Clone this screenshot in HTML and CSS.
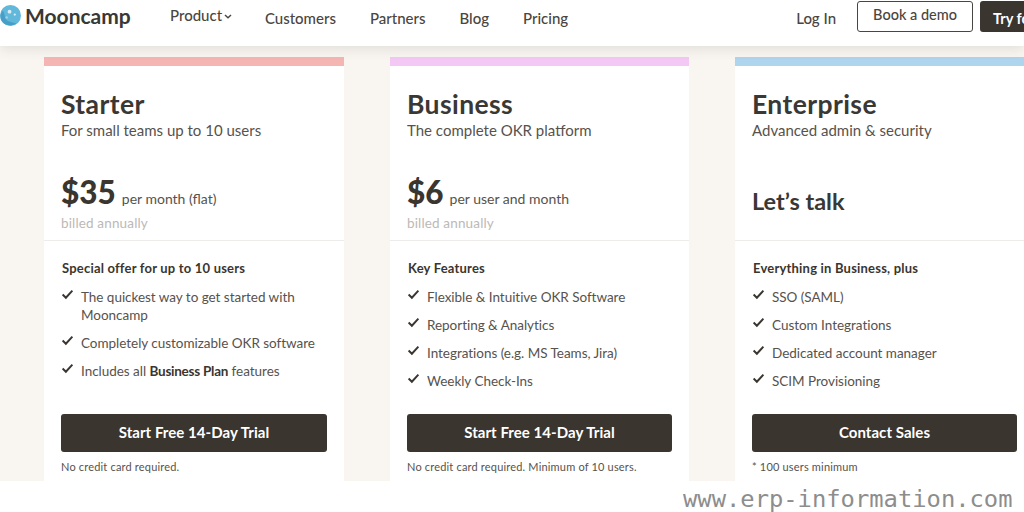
FILE: index.html
```html
<!DOCTYPE html>
<html lang="en">
<head>
<meta charset="utf-8">
<title>Mooncamp Pricing</title>
<link rel="stylesheet" href="styles.css">
</head>
<body>
<div class="page">
  <header class="topbar">
    <div class="logo">
      <svg class="logo-mark" viewBox="0 0 22 22" aria-hidden="true">
        <circle cx="11" cy="11" r="11" fill="#62b8da"/>
        <path d="M3 6c3 4 1 9 6 11 3 1 6 2 8 2-3 3-9 3-13 0C0 16-1 10 3 6z" fill="#479fc8"/>
        <circle cx="10" cy="7" r="2" fill="#d8eef6"/>
        <circle cx="15.500" cy="10" r="1.200" fill="#d8eef6"/>
        <circle cx="7" cy="13" r="1.300" fill="#9ed3e8"/>
      </svg>
      <span>Mooncamp</span>
    </div>
    <nav class="nav">
      <a class="nav-link raised">Product <svg class="caret" viewBox="0 0 8 5" aria-hidden="true"><path d="M1 1l3 2.800L7 1" fill="none" stroke="#4a4540" stroke-width="1.400"/></svg></a>
      <a class="nav-link">Customers</a>
      <a class="nav-link">Partners</a>
      <a class="nav-link">Blog</a>
      <a class="nav-link">Pricing</a>
    </nav>
    <div class="actions">
      <a class="nav-link">Log In</a>
      <a class="btn-outline">Book a demo</a>
      <a class="btn-try">Try for free</a>
    </div>
  </header>

  <main class="plans">
    <section class="card starter">
      <div class="card-head">
        <h2>Starter</h2>
        <p class="tagline">For small teams up to 10 users</p>
        <div class="price"><strong>$35</strong><span>per month (flat)</span></div>
        <p class="billed">billed annually</p>
      </div>
      <div class="card-body">
        <h3>Special offer for up to 10 users</h3>
        <ul class="features">
          <li><svg class="check" viewBox="0 0 12 10"><path d="M1.500 5l3 3 6-6.500" fill="none" stroke="#3a352f" stroke-width="1.800"/></svg><span>The quickest way to get started with Mooncamp</span></li>
          <li><svg class="check" viewBox="0 0 12 10"><path d="M1.500 5l3 3 6-6.500" fill="none" stroke="#3a352f" stroke-width="1.800"/></svg><span>Completely customizable OKR software</span></li>
          <li><svg class="check" viewBox="0 0 12 10"><path d="M1.500 5l3 3 6-6.500" fill="none" stroke="#3a352f" stroke-width="1.800"/></svg><span>Includes all <b>Business Plan</b> features</span></li>
        </ul>
        <a class="cta">Start Free 14-Day Trial</a>
        <p class="note">No credit card required.</p>
      </div>
    </section>

    <section class="card business">
      <div class="card-head">
        <h2>Business</h2>
        <p class="tagline">The complete OKR platform</p>
        <div class="price"><strong>$6</strong><span>per user and month</span></div>
        <p class="billed">billed annually</p>
      </div>
      <div class="card-body">
        <h3>Key Features</h3>
        <ul class="features">
          <li><svg class="check" viewBox="0 0 12 10"><path d="M1.500 5l3 3 6-6.500" fill="none" stroke="#3a352f" stroke-width="1.800"/></svg><span>Flexible &amp; Intuitive OKR Software</span></li>
          <li><svg class="check" viewBox="0 0 12 10"><path d="M1.500 5l3 3 6-6.500" fill="none" stroke="#3a352f" stroke-width="1.800"/></svg><span>Reporting &amp; Analytics</span></li>
          <li><svg class="check" viewBox="0 0 12 10"><path d="M1.500 5l3 3 6-6.500" fill="none" stroke="#3a352f" stroke-width="1.800"/></svg><span>Integrations (e.g. MS Teams, Jira)</span></li>
          <li><svg class="check" viewBox="0 0 12 10"><path d="M1.500 5l3 3 6-6.500" fill="none" stroke="#3a352f" stroke-width="1.800"/></svg><span>Weekly Check-Ins</span></li>
        </ul>
        <a class="cta">Start Free 14-Day Trial</a>
        <p class="note">No credit card required. Minimum of 10 users.</p>
      </div>
    </section>

    <section class="card enterprise">
      <div class="card-head">
        <h2>Enterprise</h2>
        <p class="tagline">Advanced admin &amp; security</p>
        <p class="talk">Let’s talk</p>
      </div>
      <div class="card-body">
        <h3>Everything in Business, plus</h3>
        <ul class="features">
          <li><svg class="check" viewBox="0 0 12 10"><path d="M1.500 5l3 3 6-6.500" fill="none" stroke="#3a352f" stroke-width="1.800"/></svg><span>SSO (SAML)</span></li>
          <li><svg class="check" viewBox="0 0 12 10"><path d="M1.500 5l3 3 6-6.500" fill="none" stroke="#3a352f" stroke-width="1.800"/></svg><span>Custom Integrations</span></li>
          <li><svg class="check" viewBox="0 0 12 10"><path d="M1.500 5l3 3 6-6.500" fill="none" stroke="#3a352f" stroke-width="1.800"/></svg><span>Dedicated account manager</span></li>
          <li><svg class="check" viewBox="0 0 12 10"><path d="M1.500 5l3 3 6-6.500" fill="none" stroke="#3a352f" stroke-width="1.800"/></svg><span>SCIM Provisioning</span></li>
        </ul>
        <a class="cta">Contact Sales</a>
        <p class="note">* 100 users minimum</p>
      </div>
    </section>
  </main>
  <div class="watermark">www.erp-information.com</div>
</div>
</body>
</html>
```
FILE: styles.css
```css
* { box-sizing: border-box; }
html, body { margin: 0; padding: 0; background: #fff; }
body { font-family: "Lato", "Liberation Sans", sans-serif; color: #3a352f; }
.page { position: relative; width: 1024px; height: 512px; overflow: hidden; }

.topbar {
  position: relative;
  z-index: 1;
  display: flex;
  align-items: flex-start;
  height: 46px;
  background: #fff;
  box-shadow: 0 3px 12px rgba(60, 55, 50, 0.12);
  white-space: nowrap;
}
.logo { display: flex; align-items: center; gap: 4px; width: 170px; height: 30px; font-size: 21px; font-weight: 700; color: #3a3835; flex: none; }
.logo-mark { width: 21px; height: 21px; flex: none; }
.nav { display: flex; gap: 34px; flex: none; }
.nav-link { display: block; padding-top: 9px; font-size: 15px; line-height: 18px; font-weight: 500; color: #4a4540; }
.nav-link.raised { padding-top: 6px; margin-right: -1px; }
.caret { width: 8px; height: 5px; vertical-align: 2px; margin-left: -2px; }
.actions { display: flex; align-items: flex-start; margin-left: 228px; flex: none; }
.btn-outline { margin: 1px 0 0 21px; width: 116px; height: 31px; border: 1px solid #4a4540; border-radius: 3px; font-size: 14.500px; font-weight: 500; line-height: 26px; text-align: center; color: #4a4540; }
.btn-try { margin: 1px 0 0 7px; width: 110px; height: 31px; padding: 0 0 0 13px; border-radius: 3px; background: #3a352f; color: #fff; font-size: 14.500px; font-weight: 700; line-height: 35px; }

.plans { display: flex; gap: 46px; height: 435px; padding: 11px 0 0 44px; background: #f9f6f2; }
.card { flex: none; width: 300px; height: 425px; display: flex; flex-direction: column; background: #fff; border-top: 9px solid; }
.starter { border-color: #f5b5b2; }
.business { border-color: #f3c8f5; width: 299px; }
.enterprise { border-color: #afd5ee; width: 299px; }

.card-head { flex: none; height: 175px; padding: 23px 17px 0; border-bottom: 1px solid #eeecea; }
h2 { margin: 0; font-size: 26.500px; line-height: 30px; font-weight: 700; color: #3a3835; letter-spacing: 0.4px; }
.tagline { margin: 2px 0 0; font-size: 15px; line-height: 18px; color: #57524c; }
.price { display: flex; align-items: baseline; gap: 6px; margin-top: 33px; height: 40px; }
.price strong { font-size: 31.500px; line-height: 40px; font-weight: 900; color: #3a352f; }
.price span { font-size: 14px; color: #57524c; }
.billed { margin: 2px 0 0; font-size: 13.500px; line-height: 18px; color: #bcb9b6; letter-spacing: 0.15px; }
.talk { margin: 48px 0 0; font-size: 23.500px; line-height: 28px; font-weight: 700; color: #3a3835; }

.card-body { flex: 1; display: flex; flex-direction: column; padding: 18px 17px 0; }
h3 { margin: 0; padding-left: 1px; font-size: 13px; line-height: 18px; font-weight: 700; color: #3a352f; letter-spacing: 0.2px; }
.features { flex: 1; margin: 11px 0 0; padding: 0; list-style: none; }
.features li { display: flex; gap: 7px; margin-bottom: 10px; font-size: 13.500px; line-height: 18px; color: #57524c; letter-spacing: -0.03px; }
.features b { color: #3a352f; font-weight: 700; letter-spacing: -0.25px; }
.check { flex: none; width: 13px; height: 11px; margin-top: 1px; }
.cta { display: block; flex: none; width: 100%; height: 38px; border-radius: 3px; background: #3a352f; color: #fff; font-size: 15px; font-weight: 700; line-height: 37px; text-align: center; letter-spacing: 0.05px; }
.note { margin: 8px 0 8px; font-size: 11px; line-height: 14px; color: #57524c; letter-spacing: 0.18px; }

.watermark { position: absolute; left: 683px; top: 485px; font-family: "DejaVu Sans Mono", monospace; font-size: 23.800px; line-height: 28px; color: #8d8d8d; white-space: nowrap; }
```
